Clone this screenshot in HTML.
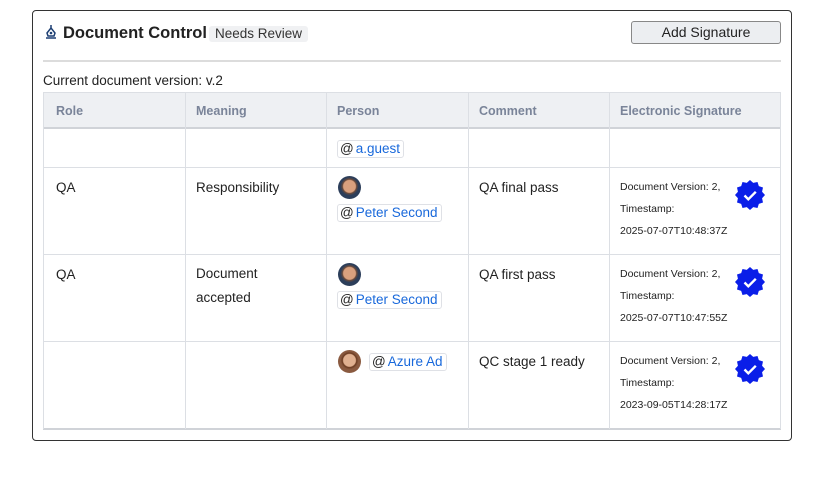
<!DOCTYPE html><html><head><style>
body{margin:0;width:824px;height:496px;background:#fff;font-family:"Liberation Sans",sans-serif;color:#222;position:relative;overflow:hidden}
.card{position:absolute;left:32px;top:10px;width:758px;height:429px;border:1px solid #333;border-radius:4px}
.a{position:absolute}
.t{font-size:13.5px;color:#222}
.h{font-size:12.5px;color:#7a8499;font-weight:bold}
.vl{position:absolute;width:1px;background:#dcdfe4}
.hl{position:absolute;height:1px;background:#dcdfe4}
.m{display:inline-block;border:1px solid #dfe1e6;border-radius:3px;padding:0 3px 0 2px;font-size:13.5px;line-height:16px;background:#fff}
.m b{font-weight:normal;color:#1868db;margin-left:2px}
.s{font-size:10.5px;color:#222;line-height:22px}
.av{width:23px;height:23px;border-radius:50%;background:radial-gradient(circle at 50% 45%,#d9a07e 0 6px,#6b4a3a 7px,#2c3e5a 9px)}
</style></head><body>
<div class="card"></div>
<svg class="a" style="left:44px;top:24px" width="14" height="16" viewBox="0 0 14 16"><path d="M7 1v3M3 9l4-5 4 5-1 3H4zM2 14h10" stroke="#1d3f73" stroke-width="1.5" fill="none"/><circle cx="7" cy="9" r="1.3" fill="#1d3f73"/></svg>
<div class="a" style="left:63px;top:24px;font-size:16.5px;font-weight:bold;color:#222">Document Control</div>
<div class="a" style="left:209px;top:26px;background:#f0f1f3;border-radius:3px;padding:0 6px;font-size:13.5px;line-height:16px;color:#333">Needs Review</div>
<div class="a" style="left:631px;top:21px;width:148px;height:21px;border:1px solid #888;border-radius:3px;background:#eceef1;font-size:14px;text-align:center;line-height:21px;color:#222">Add Signature</div>
<div class="hl" style="left:43px;top:60px;width:738px;height:2px;background:#dcdcdc"></div>
<div class="a t" style="left:43px;top:73px">Current document version: v.2</div>
<div class="a" style="left:43px;top:93px;width:738px;height:35px;background:#eef0f3"></div>
<div class="hl" style="left:43px;top:92px;width:738px"></div>
<div class="hl" style="left:43px;top:127px;width:738px;height:2px;background:#d0d3d8"></div>
<div class="hl" style="left:43px;top:167px;width:738px"></div>
<div class="hl" style="left:43px;top:254px;width:738px"></div>
<div class="hl" style="left:43px;top:341px;width:738px"></div>
<div class="hl" style="left:43px;top:428px;width:738px;height:2px;background:#d0d3d8"></div>
<div class="vl" style="left:43px;top:93px;height:336px"></div>
<div class="vl" style="left:185px;top:93px;height:336px"></div>
<div class="vl" style="left:326px;top:93px;height:336px"></div>
<div class="vl" style="left:468px;top:93px;height:336px"></div>
<div class="vl" style="left:609px;top:93px;height:336px"></div>
<div class="vl" style="left:780px;top:93px;height:336px"></div>
<div class="a h" style="left:56px;top:104px">Role</div>
<div class="a h" style="left:196px;top:104px">Meaning</div>
<div class="a h" style="left:337px;top:104px">Person</div>
<div class="a h" style="left:479px;top:104px">Comment</div>
<div class="a h" style="left:620px;top:104px">Electronic Signature</div>
<div class="a" style="left:337px;top:140px"><span class="m">@<b>a.guest</b></span></div>

<div class="a t" style="left:56px;top:180px">QA</div>
<div class="a t" style="left:196px;top:180px">Responsibility</div>
<div class="a av" style="left:338px;top:176px"></div>
<div class="a" style="left:337px;top:204px"><span class="m">@<b>Peter Second</b></span></div>
<div class="a t" style="left:479px;top:180px">QA final pass</div>
<div class="a s" style="left:620px;top:176px">Document Version: 2,<br>Timestamp:<br>2025-07-07T10:48:37Z</div>

<div class="a t" style="left:56px;top:267px">QA</div>
<div class="a t" style="left:196px;top:267px;line-height:24px;margin-top:-5px">Document<br>accepted</div>
<div class="a av" style="left:338px;top:263px"></div>
<div class="a" style="left:337px;top:291px"><span class="m">@<b>Peter Second</b></span></div>
<div class="a t" style="left:479px;top:267px">QA first pass</div>
<div class="a s" style="left:620px;top:263px">Document Version: 2,<br>Timestamp:<br>2025-07-07T10:47:55Z</div>

<div class="a av" style="left:338px;top:350px;background:radial-gradient(circle at 50% 45%,#e0b090 0 6px,#6a3a20 7px,#8a5a40 9px)"></div>
<div class="a" style="left:369px;top:353px"><span class="m">@<b>Azure Ad</b></span></div>
<div class="a t" style="left:479px;top:354px">QC stage 1 ready</div>
<div class="a s" style="left:620px;top:350px">Document Version: 2,<br>Timestamp:<br>2023-09-05T14:28:17Z</div>

<svg width="0" height="0" style="position:absolute"><defs><g id="bd"><polygon points="31,16 28.07,19.24 28.99,23.5 24.84,24.84 23.5,28.99 19.24,28.07 16,31 12.76,28.07 8.5,28.99 7.16,24.84 3.01,23.5 3.93,19.24 1,16 3.93,12.76 3.01,8.5 7.16,7.16 8.5,3.01 12.76,3.93 16,1 19.24,3.93 23.5,3.01 24.84,7.16 28.99,8.5 28.07,12.76" fill="#0a1ee8"/><path d="M10.5 16.5l3.8 3.8 7.5-7.5" stroke="#fff" stroke-width="2.4" fill="none"/></g></defs></svg>
<svg class="a" style="left:734px;top:179px" width="32" height="32" viewBox="0 0 32 32"><use href="#bd"/></svg>
<svg class="a" style="left:734px;top:266px" width="32" height="32" viewBox="0 0 32 32"><use href="#bd"/></svg>
<svg class="a" style="left:734px;top:353px" width="32" height="32" viewBox="0 0 32 32"><use href="#bd"/></svg>
</body></html>
